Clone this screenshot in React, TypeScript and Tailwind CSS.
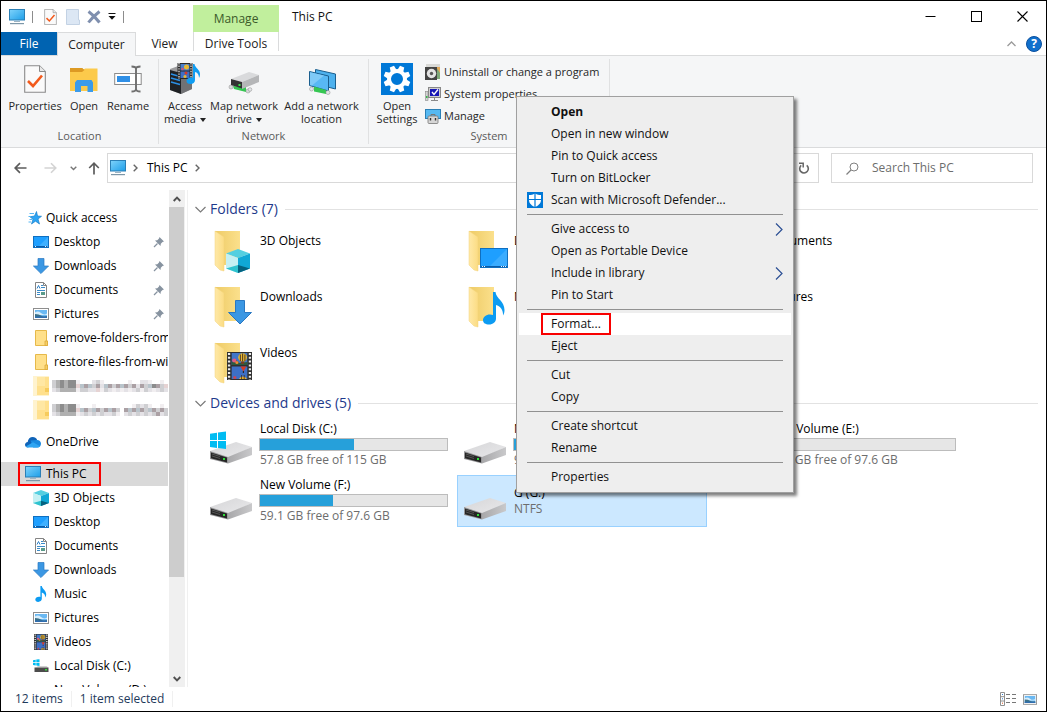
import React from "react";

type IconProps = { className?: string };

/* ---------- shared icons ---------- */

function MonitorIcon({ className = "w-4 h-4" }: IconProps) {
  return (
    <svg viewBox="0 0 16 16" className={className} aria-hidden="true">
      <defs>
        <linearGradient id="monitor" x1="0" y1="0" x2="1" y2="1">
          <stop offset="0" stopColor="#7fd3fb" />
          <stop offset="1" stopColor="#1d9ee8" />
        </linearGradient>
      </defs>
      <rect x="0.5" y="0.5" width="15" height="10.5" fill="url(#monitor)" stroke="#2b7fb5" />
      <rect x="5" y="12" width="6" height="1" fill="#9db4c4" />
      <rect x="1" y="14" width="14" height="1.2" fill="#7d97a8" />
    </svg>
  );
}

function CheckDocIcon({ className = "" }: IconProps) {
  return (
    <svg viewBox="0 0 22 28" className={className} aria-hidden="true">
      <path d="M0.7 0.7H15.5L21.3 6.5V27.3H0.7Z" fill="#fafafa" stroke="#8a8a8a" strokeWidth="1.1" />
      <path d="M15.5 0.7V6.5H21.3" fill="#e8e8e8" stroke="#8a8a8a" />
      <path d="M4 16L9 21L18 10.5" fill="none" stroke="#f25a1c" strokeWidth="2.6" />
    </svg>
  );
}

function DesktopIcon({ className = "w-4 h-4" }: IconProps) {
  return (
    <svg viewBox="0 0 16 16" className={className} aria-hidden="true">
      <rect x="0.5" y="2.5" width="15" height="11" fill="#1e9fff" stroke="#0f6fc0" />
      <path d="M15 3V13H5Z" fill="#3fb0ff" />
      <path d="M1 12.5H15" stroke="#0a5ba8" />
      <path d="M2 12.5H4M12 12.5H14.5" stroke="#e6f4ff" strokeDasharray="1 1" />
    </svg>
  );
}

function DownArrowIcon({ className = "w-4 h-4" }: IconProps) {
  return (
    <svg viewBox="0 0 16 16" className={className} aria-hidden="true">
      <path d="M5 0.5H11V8H15.6L8 15.6L0.4 8H5Z" fill="#3b97e3" stroke="#2a78c2" strokeWidth="0.7" />
    </svg>
  );
}

function DocumentIcon({ className = "w-4 h-4" }: IconProps) {
  return (
    <svg viewBox="0 0 16 16" className={className} aria-hidden="true">
      <path d="M2.5 0.5H10.5L13.5 3.5V15.5H2.5Z" fill="#fff" stroke="#848484" />
      <path d="M10.5 0.5V3.5H13.5" fill="none" stroke="#848484" />
      <path d="M4 6.5L5.5 3.5L7 6.5" fill="none" stroke="#2f7fc4" />
      <path d="M8 3.5H10M8 5.5H12M4 8.5H12M4 10.5H7M4 12.5H7" stroke="#3b8bc8" />
      <rect x="8" y="10" width="4" height="3" fill="#5b9b8a" />
    </svg>
  );
}

function PictureIcon({ className = "w-4 h-4" }: IconProps) {
  return (
    <svg viewBox="0 0 16 16" className={className} aria-hidden="true">
      <rect x="0.5" y="2.5" width="15" height="11" fill="#fff" stroke="#8e8e8e" />
      <rect x="2" y="4" width="12" height="8" fill="#6ab8f2" />
      <path d="M2 6.5Q5 4.5 8 7T14 7.5V9H2Z" fill="#d6edfb" />
      <path d="M2 8Q6 8 8 9.5T14 10V12H2Z" fill="#3a7088" />
      <path d="M2 10.5H14V12H2Z" fill="#2f6db0" />
    </svg>
  );
}

function NoteIcon({ className = "w-4 h-4" }: IconProps) {
  return (
    <svg viewBox="0 0 16 16" className={className} aria-hidden="true">
      <path
        d="M7.4 0H8.8C9.2 3.2 13.2 4.3 13.2 8.3C13.2 9.6 12.7 10.7 12 11.5C12.4 8.8 11 7.2 8.8 6.6V12.8C8.8 14.6 7.2 15.9 5.2 15.9C3.5 15.9 2.3 15 2.3 13.6C2.3 12 4 10.8 6 10.8C6.5 10.8 7 10.9 7.4 11Z"
        fill="#0c9bf2"
      />
    </svg>
  );
}

function FilmArt() {
  return (
    <>
      <rect width="24" height="28" fill="#303030" />
      <path d="M2 1V28M22 1V28" stroke="#ececec" strokeWidth="2.2" strokeDasharray="2 1.8" />
      <rect x="4.5" y="1" width="15" height="12" fill="#4176c8" />
      <rect x="4.5" y="14.5" width="15" height="12.5" fill="#3d6fc6" />
      <path d="M4.5 10L9 8L12 11L19.500 10V13H4.500Z" fill="#2f5a3e" />
      <circle cx="15" cy="5.500" r="4.200" fill="#e9b932" />
      <path d="M15 1.500V9.500M12.800 2.500V9M17.200 2.500V9" stroke="#3d2d22" strokeWidth="0.900" />
      <path d="M13 9.500H17L16 12H14Z" fill="#7b3c20" />
      <circle cx="7" cy="8.500" r="2" fill="#e05a80" />
      <circle cx="9.500" cy="10.500" r="1.500" fill="#ef8a35" />
      <path d="M13 14.500H18.500L15.700 19.500Z" fill="#d83a25" />
      <path d="M15.700 19V21" stroke="#2b1d16" />
      <path d="M11.500 27A4 4 0 0 1 19 27Z" fill="#f0b62c" />
      <path d="M14 23V27M16.500 23V27" stroke="#3d2d22" strokeWidth="0.800" />
      <circle cx="7.500" cy="25.500" r="1.500" fill="#c94654" />
    </>
  );
}

function FilmIcon({ className = "w-4 h-4" }: IconProps) {
  return (
    <svg viewBox="0 0 24 28" className={className} preserveAspectRatio="none" aria-hidden="true">
      <FilmArt />
    </svg>
  );
}

function CubeArt() {
  return (
    <>
      <path d="M12 0L24 4.500L12 9L0 4.500Z" fill="#54cfe0" />
      <path d="M0 4.500L12 9V24L0 19.500Z" fill="#c5f0f3" />
      <path d="M24 4.500L12 9V24L24 19.500Z" fill="#10a8d6" />
      <path d="M0 19.500L12 16V24Z" fill="#2ec3cf" />
      <path d="M24 19.500L12 16V24Z" fill="#05627f" />
    </>
  );
}

function CubeIcon({ className = "w-4 h-4" }: IconProps) {
  return (
    <svg viewBox="0 0 24 24" className={className} aria-hidden="true">
      <CubeArt />
    </svg>
  );
}

function SmallFolderIcon({ className = "w-4 h-4" }: IconProps) {
  return (
    <svg viewBox="0 0 16 16" className={className} aria-hidden="true">
      <path d="M2.5 0.5H13.5V11H14.5V15.5H2.5Z" fill="#ffe08a" stroke="#e6b94a" />
      <path d="M12 11H14.5V15.5H12Z" fill="#f6cf67" stroke="#dca93a" strokeWidth="0.8" />
    </svg>
  );
}

function FolderBack() {
  return (
    <>
      <defs>
        <linearGradient id="folderFront" x1="0" y1="0" x2="1" y2="0">
          <stop offset="0" stopColor="#ffe9a8" />
          <stop offset="1" stopColor="#fbdc83" />
        </linearGradient>
        <linearGradient id="folderBack" x1="0" y1="0" x2="1" y2="0">
          <stop offset="0" stopColor="#eecb66" />
          <stop offset="1" stopColor="#fbe08c" />
        </linearGradient>
      </defs>
      <path d="M7 4H32V38H7Z" fill="url(#folderBack)" />
      <path d="M7 4L16 10V44L12 43L7 38Z" fill="url(#folderFront)" stroke="#f2d27a" strokeWidth="0.5" />
    </>
  );
}

function FolderTileIcon({ kind }: { kind: string }) {
  return (
    <svg viewBox="0 0 48 48" className="h-12 w-12 shrink-0" aria-hidden="true">
      <FolderBack />
      {kind === "3d" && (
        <svg x="18" y="22" width="24" height="24" viewBox="0 0 24 24">
          <CubeArt />
        </svg>
      )}
      {kind === "desktop" && (
        <g>
          <rect x="18.500" y="21.500" width="27" height="19" fill="#1e9fff" stroke="#0f6fc0" />
          <path d="M45 22V39H28Z" fill="#3aacff" />
          <path d="M19 39.500H45" stroke="#0a5ba8" />
          <path d="M20 39.500H23M39 39.500H45" stroke="#e6f4ff" strokeDasharray="1 1" />
        </g>
      )}
      {kind === "download" && (
        <path d="M27.500 17.500H36.500V29.500H43.500L32 41L20.500 29.500H27.500Z" fill="#3b97e3" stroke="#2a78c2" />
      )}
      {kind === "music" && (
        <path
          d="M31 9H33.500C34 15.500 42.500 18 42.500 27C42.500 29 42 31 41 32.500C41.500 27 38 23 34 22V35.500C34 39 31 41.500 27 41.500C23.500 41.500 21 40 21 37C21 34 24 31.500 28 31.500C29.200 31.500 30.200 31.700 31 32Z"
          fill="#0c9bf2"
        />
      )}
      {kind === "document" && (
        <g>
          <path d="M21.500 15.500H36.500L42.500 21.500V42.500H21.500Z" fill="#fff" stroke="#848484" />
          <path d="M25 26H39M25 30H39M25 34H39M25 38H39" stroke="#3b8bc8" />
        </g>
      )}
      {kind === "picture" && (
        <g>
          <rect x="18.500" y="20.500" width="27" height="20" fill="#fff" stroke="#8e8e8e" />
          <rect x="21" y="23" width="22" height="15" fill="#6ab8f2" />
          <path d="M21 31Q31 29 43 34V38H21Z" fill="#3a7088" />
        </g>
      )}
      {kind === "video" && (
        <svg x="19" y="13" width="25" height="28" viewBox="0 0 24 28" preserveAspectRatio="none">
          <FilmArt />
        </svg>
      )}
    </svg>
  );
}

function DriveTileIcon({ windows }: { windows?: boolean }) {
  return (
    <svg viewBox="0 0 48 48" className="h-12 w-12 shrink-0" aria-hidden="true">
      <defs>
        <linearGradient id="driveTop" x1="0" y1="0" x2="1" y2="1">
          <stop offset="0" stopColor="#d6d6d8" />
          <stop offset="1" stopColor="#e9e9eb" />
        </linearGradient>
        <linearGradient id="driveSide" x1="0" y1="0" x2="1" y2="0">
          <stop offset="0" stopColor="#a8a8aa" />
          <stop offset="1" stopColor="#c9c9cb" />
        </linearGradient>
      </defs>
      <path d="M2 31L28 22L44 27L20 38Z" fill="url(#driveTop)" />
      <path d="M20 37L44 27V35L20 43.500Z" fill="url(#driveSide)" />
      <path d="M2 31L20 37V43.500L2 39Z" fill="#969698" />
      <path d="M3 32.500L19 37.500V42.500L3 38.200Z" fill="#262626" />
      <path d="M4 34L12 36.500M4 36L12 38.500" stroke="#555" />
      <rect x="15" y="38" width="2" height="2" fill="#2fe03a" />
      {windows && (
        <path d="M2 13.800L9 12.700V20H2ZM10 12.500L18 11.500V20H10ZM2 21H9V28L2 27ZM10 21H18V29L10 28Z" fill="#00bcf2" />
      )}
    </svg>
  );
}

function SmallDriveIcon({ className = "w-4 h-4" }: IconProps) {
  return (
    <svg viewBox="0 0 16 16" className={className} aria-hidden="true">
      <path d="M0 2.2L2.7 1.7V4.3H0ZM3.3 1.6L6.5 1.2V4.3H3.3ZM0 5H2.7V7.5L0 7.1ZM3.3 5H6.5V8L3.3 7.6Z" fill="#00bcf2" />
      <path d="M3 9.5L5 8H13.5L15.5 9.5Z" fill="#cfcfcf" />
      <rect x="1.5" y="9.5" width="14" height="4.5" fill="#4c4c4c" />
      <rect x="12" y="11" width="2" height="1.5" fill="#35dd3c" />
    </svg>
  );
}

function StarIcon() {
  return (
    <svg viewBox="0 0 16 16" className="h-4 w-4" aria-hidden="true">
      <path d="M10.5 1.5L11.5 6L15.5 6.300L12 9L13.500 14L9.500 11.200L5.500 14L7 9.300L4 6.800L8.500 6Z" fill="#2ba4f4" stroke="#1a7fca" strokeWidth="0.7" />
      <path d="M3.5 3.500H8M2.500 6.500H5M3.500 9.500H6M2.500 12H5" stroke="#55b6f3" />
    </svg>
  );
}

function CloudIcon() {
  return (
    <svg viewBox="0 0 16 16" className="h-4 w-4" aria-hidden="true">
      <path d="M3 13.5C1.2 13.5 0 12.3 0 10.7C0 9.2 1.2 8 2.7 7.9C3 5 5.1 3 7.8 3C9.7 3 11.2 4 12.1 5.7L9 10Z" fill="#0f63b8" />
      <path d="M5.5 6.6L12.1 6C14.3 6 16 7.7 16 9.8C16 12 14.4 13.5 12.3 13.5H8Z" fill="#1a8ae0" />
      <path d="M0.8 12.5L8 8.3L15.2 12.3C14.5 13.1 13.5 13.5 12.3 13.5H3C2.1 13.5 1.3 13.1 0.8 12.5Z" fill="#2ea5f2" />
    </svg>
  );
}

function PinIcon() {
  return (
    <svg viewBox="0 0 12 12" className="h-3 w-3" aria-hidden="true">
      <path d="M6.5 1L11 5.5L9.5 6L7.8 7.7L7.5 10L2 4.5L4.3 4.2L6 2.5Z" fill="#8793a0" />
      <path d="M4.5 7.5L1 11" stroke="#8793a0" strokeWidth="1.3" />
    </svg>
  );
}

function Caret() {
  return (
    <svg viewBox="0 0 6 4" className="ml-1 inline-block h-1 w-[6px] align-middle" aria-hidden="true">
      <path d="M0 0H6L3 4Z" fill="#222" />
    </svg>
  );
}

/* ---------- title bar and tabs ---------- */

function TitleBar() {
  return (
    <header className="flex h-[31px] shrink-0 items-stretch pr-px">
      <div className="flex w-48 items-center pl-2">
        <MonitorIcon />
        <span className="ml-[7px] h-3 w-px bg-[#8c8c8c]" />
        <button aria-label="Properties" className="ml-[11px]">
          <CheckDocIcon className="h-4 w-[13px]" />
        </button>
        <button aria-label="New folder" className="ml-[9px]">
          <svg viewBox="0 0 14 16" className="h-4 w-[14px]">
            <path d="M0.5 0.5H12.5V11H13.5V15.5H0.5Z" fill="#dce7f4" stroke="#c3d2e4" />
          </svg>
        </button>
        <button aria-label="Delete" className="ml-[7px]">
          <svg viewBox="0 0 14 14" className="h-[14px] w-[14px]">
            <path d="M1.5 1.5C5 4 9 8 12.5 12.5M12.5 1.5C8 5 4 9 1.5 12.5" stroke="#7f8fae" strokeWidth="3" fill="none" />
          </svg>
        </button>
        <button aria-label="Customize toolbar" className="ml-[7px]">
          <svg viewBox="0 0 8 7" className="h-[7px] w-2">
            <path d="M0.5 0.5H7.5" stroke="#111" />
            <path d="M0.5 3H7.5L4 6.7Z" fill="#111" />
          </svg>
        </button>
        <span className="ml-[7px] h-3 w-px bg-[#8c8c8c]" />
      </div>
      <div className="mt-1 flex w-[86px] items-center justify-center bg-[#c1ef9d] text-[#3c5a2a]">Manage</div>
      <h1 className="ml-[13px] flex items-center text-[#111]">This PC</h1>
      <div className="ml-auto flex">
        <button aria-label="Minimize" className="flex w-[46px] items-center justify-center">
          <svg viewBox="0 0 11 11" className="h-[11px] w-[11px]"><path d="M0.5 5.5H10.5" stroke="#000" /></svg>
        </button>
        <button aria-label="Maximize" className="flex w-[46px] items-center justify-center">
          <svg viewBox="0 0 11 11" className="h-[11px] w-[11px]"><rect x="0.5" y="0.5" width="10" height="10" fill="none" stroke="#000" /></svg>
        </button>
        <button aria-label="Close" className="flex w-[46px] items-center justify-center">
          <svg viewBox="0 0 11 11" className="h-[11px] w-[11px]"><path d="M0.5 0.5L10.5 10.5M10.5 0.5L0.5 10.5" stroke="#000" strokeWidth="1.1" /></svg>
        </button>
      </div>
    </header>
  );
}

function Tabs() {
  return (
    <nav className="flex h-6 shrink-0 items-stretch border-b border-[#dadbdc]">
      <button className="w-14 bg-[#0063b1] text-white">File</button>
      <button className="-mb-px w-[79px] border-x border-t border-[#dadbdc] bg-[#f5f6f7] text-[#222]">Computer</button>
      <button className="w-[57px] text-[#222]">View</button>
      <button className="mb-1 w-[86px] border-x border-[#dadbdc] pt-1 text-[#222]">Drive Tools</button>
      <div className="ml-auto flex items-center gap-[10px] pr-1">
        <button aria-label="Collapse ribbon">
          <svg viewBox="0 0 9 6" className="h-[6px] w-[9px]"><path d="M0.5 5L4.5 1L8.5 5" fill="none" stroke="#9a9a9a" strokeWidth="1.3" /></svg>
        </button>
        <button aria-label="Help" className="flex h-4 w-4 items-center justify-center rounded-full border border-[#0a4f9e] bg-[#1070cc] text-xs leading-3 font-bold text-white">?</button>
      </div>
    </nav>
  );
}

/* ---------- ribbon ---------- */

function RibbonButton({ icon, lines, caret, width }: { icon: React.ReactNode; lines: string[]; caret?: boolean; width: string }) {
  return (
    <button className={`flex flex-col items-center pt-1 ${width}`}>
      <span className="mb-1 flex h-8 items-center justify-center">{icon}</span>
      {lines.map((line, i) => (
        <span key={line} className="leading-[13px] whitespace-nowrap">
          {line}
          {caret && i === lines.length - 1 && <Caret />}
        </span>
      ))}
    </button>
  );
}

function RibbonGroup({ label, width, children }: { label: string; width: string; children: React.ReactNode }) {
  return (
    <section aria-label={label} className={`flex flex-col border-r border-[#e0e1e2] ${width}`}>
      <div className="flex h-[71px]">{children}</div>
      <div className="text-center leading-4 text-[#5a5a5a]">{label}</div>
    </section>
  );
}

function OpenFolderIcon() {
  return (
    <svg viewBox="0 0 28 25" className="h-[25px] w-7">
      <path d="M0 1H12L14 3H0Z" fill="#d8951c" />
      <path d="M0 4H12L15 1.5H27.5V24H0Z" fill="#fcca4b" />
      <path d="M0 1H12L14.5 3L12 5H0Z" fill="#dd9a24" />
      <path d="M5 25V15.5L7 13H21.5L23 15.5V25H17.5V19H11V25Z" fill="#3b9bea" />
    </svg>
  );
}

function RenameIcon() {
  return (
    <svg viewBox="0 0 28 28" className="h-7 w-7">
      <rect x="0.7" y="8.5" width="26.5" height="11" fill="#fff" stroke="#8b8b8b" />
      <rect x="3" y="11" width="13" height="6" fill="#2f8fe6" />
      <path d="M17.5 1.5C20 1.5 22 2 22 4V24C22 26 20 26.5 17.5 26.5M26.5 1.5C24 1.5 22 2 22 4M22 24C22 26 24 26.5 26.5 26.5" fill="none" stroke="#6f6f6f" strokeWidth="1.9" />
    </svg>
  );
}

function MediaIcon() {
  return (
    <svg viewBox="0 0 32 32" className="h-8 w-8">
      <path d="M1 6L12 2L23 6V26L12 31L1 27Z" fill="#9c9c9e" />
      <path d="M1 7L12 10V31L1 27Z" fill="#1f2124" />
      <path d="M2 11L11 13.5M2 15L11 17.5M2 19L11 21.5" stroke="#2b8fe4" strokeWidth="1.5" />
      <path d="M12 9L23 6V26L12 31Z" fill="#717275" />
      <rect x="8.5" y="0" width="15" height="16" fill="#282828" />
      <path d="M10 0V16M22 0V16" stroke="#ddd" strokeWidth="1.3" strokeDasharray="1.4 1.2" />
      <rect x="11.5" y="1" width="9" height="6.500" fill="#4a80cc" />
      <rect x="11.5" y="8.500" width="9" height="6.500" fill="#3d6fc6" />
      <circle cx="17.500" cy="4" r="2.500" fill="#e9b932" />
      <circle cx="13.500" cy="6" r="1.200" fill="#d64f70" />
      <circle cx="17" cy="10" r="1.500" fill="#d83a25" />
      <circle cx="16" cy="13.500" r="1.600" fill="#e9b932" />
      <path d="M24 1H25.500C26 5 31 6.500 31 11C31 13 30.500 14 30 15C30 11 28 9.500 26 9V17C26 19.500 24 21 21.500 21C19 21 17.500 19.800 17.500 18C17.500 16 19.500 14.500 22 14.500C22.800 14.500 23.500 14.600 24 14.800Z" fill="#109df2" />
    </svg>
  );
}

function NetworkDriveIcon() {
  return (
    <svg viewBox="0 0 32 24" className="mt-2 h-6 w-8">
      <path d="M5 15L18 16V21L6 18Z" fill="#35c652" />
      <circle cx="20" cy="20" r="2" fill="#d6d8da" stroke="#9a9a9a" strokeWidth="0.6" />
      <circle cx="3" cy="16" r="2" fill="#d6d8da" stroke="#9a9a9a" strokeWidth="0.6" />
      <path d="M3 8L21 1L31 4L14 11Z" fill="#d9dadc" />
      <path d="M14 11L31 4V11L14 18Z" fill="#b5b6b8" />
      <path d="M3 8L14 11V17.5L3 14Z" fill="#333" />
      <rect x="10.5" y="13" width="2" height="2" fill="#3de34a" />
      <circle cx="22" cy="18.5" r="1.8" fill="#e4e6e8" stroke="#999" strokeWidth="0.6" />
    </svg>
  );
}

function NetworkLocationIcon() {
  return (
    <svg viewBox="0 0 30 28" className="mt-1 h-7 w-[30px]">
      <path d="M8.500 2.500L28.500 7V22L8.500 17Z" fill="#4db1ee" stroke="#1b5f8f" />
      <path d="M2.500 4.500L21.500 9V24L2.500 18.500Z" fill="#58b8f4" stroke="#1b5f8f" />
      <path d="M3 5.200L17 8.500L5 18.500L3 18Z" fill="#7fcaf8" />
      <path d="M7 19.500L19 23V27L7 24.500Z" fill="#35c652" />
      <circle cx="4.500" cy="22" r="2" fill="#e4e6e8" stroke="#999" strokeWidth="0.600" />
      <circle cx="21" cy="25.500" r="2" fill="#e4e6e8" stroke="#999" strokeWidth="0.600" />
    </svg>
  );
}

function SettingsIcon() {
  return (
    <svg viewBox="0 0 32 32" className="h-8 w-8">
      <rect width="32" height="32" fill="#0078d7" />
      <g fill="#fff">
        {[22.5, 67.5, 112.5, 157.5, 202.5, 247.5, 292.5, 337.5].map((a) => (
          <path key={a} d="M12.8 8L13.7 2.600H18.300L19.200 8Z" transform={`rotate(${a} 16 16)`} />
        ))}
      </g>
      <circle cx="16" cy="16" r="8" fill="none" stroke="#fff" strokeWidth="4" />
    </svg>
  );
}

function UninstallIcon() {
  return (
    <svg viewBox="0 0 16 16" className="h-4 w-4">
      <rect x="1" y="0" width="14" height="4" fill="#d9d9d6" />
      <rect x="10" y="3" width="5" height="12" fill="#7ea878" />
      <path d="M11 3H15V9Z" fill="#e2aa5c" />
      <rect x="0" y="3" width="12" height="13" fill="#444" />
      <circle cx="6.5" cy="9.5" r="4.7" fill="#e4e4e4" />
      <circle cx="6.5" cy="9.5" r="1.7" fill="#555" />
    </svg>
  );
}

function SystemIcon() {
  return (
    <svg viewBox="0 0 16 16" className="h-4 w-4">
      <rect x="0.5" y="5.5" width="2.5" height="9" fill="#d4d4d4" stroke="#888" strokeWidth="0.6" />
      <rect x="1" y="10" width="1.5" height="2" fill="#38b54a" />
      <rect x="3.5" y="1.5" width="12" height="10" fill="#cfcfcf" stroke="#888" />
      <rect x="5" y="3" width="9" height="7" fill="#1717b5" />
      <path d="M7 6L9 8.5L13 3.5" fill="none" stroke="#fff" strokeWidth="1.4" />
      <path d="M6 14.5H13M9.5 12V14" stroke="#8a8a8a" />
    </svg>
  );
}

function ManageIcon() {
  return (
    <svg viewBox="0 0 16 16" className="h-4 w-4">
      <rect x="0.5" y="1.5" width="15" height="9" fill="#56b9f2" stroke="#2b7fb5" />
      <rect x="3" y="8" width="10" height="7.5" rx="1" fill="#d6d6d6" stroke="#777" strokeWidth="0.8" />
      <path d="M6 8V6.5H10V8" fill="none" stroke="#777" />
      <path d="M5.5 10V12.5M10.5 10V12.5" stroke="#333" strokeWidth="1.4" />
    </svg>
  );
}

const systemCommands = [
  { label: "Uninstall or change a program", icon: <UninstallIcon /> },
  { label: "System properties", icon: <SystemIcon /> },
  { label: "Manage", icon: <ManageIcon /> },
];

function Ribbon() {
  return (
    <div className="flex h-[92px] shrink-0 border-b border-[#dadbdc] bg-[#f5f6f7] py-[3px] text-[11px] text-[#262626]">
      <RibbonGroup label="Location" width="w-[158px]">
        <RibbonButton width="ml-1 w-[60px]" icon={<CheckDocIcon className="h-7 w-[22px]" />} lines={["Properties"]} />
        <RibbonButton width="w-[38px]" icon={<OpenFolderIcon />} lines={["Open"]} />
        <RibbonButton width="w-[50px]" icon={<RenameIcon />} lines={["Rename"]} />
      </RibbonGroup>
      <RibbonGroup label="Network" width="w-[210px]">
        <RibbonButton width="ml-1 w-[44px]" icon={<MediaIcon />} lines={["Access", "media"]} caret />
        <RibbonButton width="w-[74px]" icon={<NetworkDriveIcon />} lines={["Map network", "drive"]} caret />
        <RibbonButton width="w-[81px]" icon={<NetworkLocationIcon />} lines={["Add a network", "location"]} />
      </RibbonGroup>
      <RibbonGroup label="System" width="w-[241px]">
        <RibbonButton width="ml-1 w-12" icon={<SettingsIcon />} lines={["Open", "Settings"]} />
        <div className="ml-1 flex flex-col pt-[2px]">
          {systemCommands.map((c) => (
            <button key={c.label} className="flex h-[22px] items-center gap-[3px] whitespace-nowrap">
              {c.icon}
              {c.label}
            </button>
          ))}
        </div>
      </RibbonGroup>
    </div>
  );
}

/* ---------- address row ---------- */

function Crumb() {
  return (
    <svg viewBox="0 0 5 8" className="h-2 w-[5px]" aria-hidden="true">
      <path d="M0.7 0.7L4 4L0.7 7.3" fill="none" stroke="#666" strokeWidth="1.4" />
    </svg>
  );
}

function AddressRow() {
  return (
    <div className="flex h-[42px] shrink-0 items-start pt-[5px] pr-[13px] pl-[13px]">
      <div className="flex h-[30px] w-[93px] items-center">
        <button aria-label="Back">
          <svg viewBox="0 0 13 12" className="h-3 w-[13px]"><path d="M12.5 6H1.5M6 1.2L1.2 6L6 10.8" fill="none" stroke="#5c5c5c" strokeWidth="1.7" /></svg>
        </button>
        <button aria-label="Forward" className="ml-[17px]">
          <svg viewBox="0 0 13 12" className="h-3 w-[13px]"><path d="M0.5 6H11.5M7 1.2L11.8 6L7 10.8" fill="none" stroke="#d3d3d3" strokeWidth="1.6" /></svg>
        </button>
        <button aria-label="Recent locations" className="ml-[13px]">
          <svg viewBox="0 0 7 5" className="h-[5px] w-[7px]"><path d="M0.7 0.7L3.5 3.5L6.3 0.7" fill="none" stroke="#777" strokeWidth="1.4" /></svg>
        </button>
        <button aria-label="Up" className="ml-[11px]">
          <svg viewBox="0 0 12 13" className="h-[13px] w-3"><path d="M6 12.5V1.5M1.2 6L6 1.2L10.8 6" fill="none" stroke="#5c5c5c" strokeWidth="1.7" /></svg>
        </button>
      </div>
      <div className="flex h-[30px] grow items-center border border-[#d9d9d9] pl-[2px]">
        <MonitorIcon />
        <span className="ml-[7px]"><Crumb /></span>
        <button className="mr-[7px] ml-[9px]">This PC</button>
        <Crumb />
        <button aria-label="Refresh" className="mr-2 ml-auto">
          <svg viewBox="0 0 12 13" className="h-[13px] w-3">
            <path d="M8.7 3.3A4.3 4.3 0 1 1 3.2 3.4" fill="none" stroke="#666" strokeWidth="1.6" />
            <path d="M1 1.2H5.2V5.4" fill="none" stroke="#666" strokeWidth="1.5" />
          </svg>
        </button>
      </div>
      <label className="ml-3 flex h-[30px] w-[202px] items-center border border-[#d9d9d9] pl-[14px]">
        <svg viewBox="0 0 13 13" className="h-[13px] w-[13px] shrink-0" aria-hidden="true">
          <circle cx="8" cy="5" r="4" fill="none" stroke="#808080" />
          <path d="M5 8L0.5 12.5" stroke="#808080" strokeWidth="1.2" />
        </svg>
        <input
          type="search"
          aria-label="Search This PC"
          placeholder="Search This PC"
          className="ml-[13px] w-full min-w-0 bg-transparent outline-none placeholder:text-[#6d6d6d]"
        />
      </label>
    </div>
  );
}

/* ---------- navigation pane ---------- */

type NavItem = { label: string; icon: React.ReactNode; pinned?: boolean };

function NavRow({ item }: { item: NavItem }) {
  return (
    <a href="#" className="flex h-6 shrink-0 items-center pl-8 whitespace-nowrap">
      <span className="mr-[5px] shrink-0">{item.icon}</span>
      {item.label}
      {item.pinned && <span className="mr-[3px] ml-auto"><PinIcon /></span>}
    </a>
  );
}

const quickItems: NavItem[] = [
  { label: "Desktop", icon: <DesktopIcon />, pinned: true },
  { label: "Downloads", icon: <DownArrowIcon />, pinned: true },
  { label: "Documents", icon: <DocumentIcon />, pinned: true },
  { label: "Pictures", icon: <PictureIcon />, pinned: true },
  { label: "remove-folders-from-", icon: <SmallFolderIcon /> },
  { label: "restore-files-from-win", icon: <SmallFolderIcon /> },
];

const pcItems: NavItem[] = [
  { label: "3D Objects", icon: <CubeIcon /> },
  { label: "Desktop", icon: <DesktopIcon /> },
  { label: "Documents", icon: <DocumentIcon /> },
  { label: "Downloads", icon: <DownArrowIcon /> },
  { label: "Music", icon: <NoteIcon /> },
  { label: "Pictures", icon: <PictureIcon /> },
  { label: "Videos", icon: <FilmIcon className="mx-px h-4 w-[14px]" /> },
  { label: "Local Disk (C:)", icon: <SmallDriveIcon /> },
  { label: "New Volume (D:)", icon: <span className="block h-4 w-4" /> },
];

const shades: Record<string, string> = {
  a: "#8c8c8c",
  b: "#b0b0b0",
  c: "#cfcfd2",
  d: "#e4e2e6",
  e: "#f1eef0",
  f: "#e6d3d3",
  g: "#b9c4cb",
  h: "#aba0a4",
  ".": "#ffffff",
};

const mosaics = [
  ["cbabaae...dce......e..dde..e.", "cbabaafghgchdghchghchdhcgahcf", "dcbbbbeccddfecdedededcecdedcd"],
  ["cbabaae...e.........ecdce..e.", "cbabaafghcghchghc.hghghcghchc", "dcbbbbedcdcdcddce.dcdcdcdchdc"],
];

function MosaicRow({ rows }: { rows: string[] }) {
  return (
    <div className="flex h-6 shrink-0 items-center pl-8" aria-hidden="true">
      <svg viewBox="0 0 16 20" className="mr-[3px] h-5 w-4 shrink-0">
        <rect width="16" height="20" fill="#fff3cf" />
        <rect x="4" y="1" width="12" height="18" fill="#ffe08d" />
        <rect x="4" y="1" width="8" height="9" fill="#ffe7a3" />
        <rect x="12" y="12" width="4" height="4" fill="#f6cb5c" />
      </svg>
      <svg viewBox="0 0 116 12" className="h-3 w-[116px] shrink-0" shapeRendering="crispEdges">
        {rows.map((row, y) =>
          row.split("").map((c, x) => <rect key={`${x}-${y}`} x={x * 4} y={y * 4} width="4" height="4" fill={shades[c]} />)
        )}
      </svg>
    </div>
  );
}

function NavPane() {
  return (
    <div className="flex w-[187px] shrink-0 border-r border-[#f0f0f0]">
      <nav className="flex w-[167px] shrink-0 flex-col overflow-hidden pt-4">
        <a href="#" className="flex h-6 shrink-0 items-center gap-1 pl-[25px]"><StarIcon />Quick access</a>
        {quickItems.map((i) => <NavRow key={i.label} item={i} />)}
        {mosaics.map((m, i) => <MosaicRow key={i} rows={m} />)}
        <a href="#" className="mt-2 flex h-6 shrink-0 items-center gap-[5px] pl-6"><CloudIcon />OneDrive</a>
        <a href="#" aria-current="page" className="mt-2 flex h-6 shrink-0 items-center bg-[#d9d9d9] pl-[17px]">
          <span className="flex h-6 items-center gap-[5px] border-2 border-[#f80000] pr-3 pl-[5px]"><MonitorIcon />This PC</span>
        </a>
        {pcItems.map((i) => <NavRow key={i.label} item={i} />)}
      </nav>
      <div className="ml-px flex w-4 flex-col bg-[#f0f0f0]">
        <button aria-label="Scroll up" className="flex h-[17px] shrink-0 items-center justify-center">
          <svg viewBox="0 0 8 6" className="h-[6px] w-2"><path d="M0.7 5L4 1.7L7.3 5" fill="none" stroke="#505050" strokeWidth="1.9" /></svg>
        </button>
        <div className="flex grow flex-col pr-px">
          <div className="h-[80%] bg-[#cdcdcd]" />
        </div>
        <button aria-label="Scroll down" className="flex h-[17px] shrink-0 items-center justify-center">
          <svg viewBox="0 0 8 6" className="h-[6px] w-2"><path d="M0.7 1L4 4.3L7.3 1" fill="none" stroke="#505050" strokeWidth="1.9" /></svg>
        </button>
      </div>
    </div>
  );
}

/* ---------- content ---------- */

function SectionHeader({ title }: { title: string }) {
  return (
    <h2 className="flex h-[26px] items-center text-sm text-[#1e3a8c]">
      <svg viewBox="0 0 11 7" className="mr-1 h-[7px] w-[11px]" aria-hidden="true">
        <path d="M0.5 1L5.5 6L10.5 1" fill="none" stroke="#7a7a7a" strokeWidth="1.2" />
      </svg>
      {title}
      <span className="ml-[7px] h-px grow bg-[#e2e2e2]" />
    </h2>
  );
}

const folders = [
  { name: "3D Objects", kind: "3d" },
  { name: "Desktop", kind: "desktop" },
  { name: "Documents", kind: "document" },
  { name: "Downloads", kind: "download" },
  { name: "Music", kind: "music" },
  { name: "Pictures", kind: "picture" },
  { name: "Videos", kind: "video" },
];

const drives = [
  { name: "Local Disk (C:)", detail: "57.8 GB free of 115 GB", used: 50, windows: true },
  { name: "New Volume (D:)", detail: "93.2 GB free of 97.6 GB", used: 5 },
  { name: "New Volume (E:)", detail: "93.2 GB free of 97.6 GB", used: 5 },
  { name: "New Volume (F:)", detail: "59.1 GB free of 97.6 GB", used: 39 },
  { name: "G (G:)", detail: "NTFS", selected: true },
];

function Content() {
  return (
    <main className="min-w-0 grow overflow-hidden pt-[6px] pr-2 pl-[7px]">
      <SectionHeader title="Folders (7)" />
      <div className="mt-1 ml-2 grid grid-cols-[repeat(auto-fill,250px)] gap-1">
        {folders.map((f) => (
          <div key={f.name} className="flex h-[52px] items-start pt-px pl-[5px]">
            <FolderTileIcon kind={f.kind} />
            <span className="mt-[6px] ml-1 leading-4">{f.name}</span>
          </div>
        ))}
      </div>
      <SectionHeader title="Devices and drives (5)" />
      <div className="mt-[3px] ml-2 grid grid-cols-[repeat(auto-fill,250px)] gap-1">
        {drives.map((d) => (
          <div
            key={d.name}
            className={d.selected ? "flex h-[52px] items-start border border-[#99d1ff] bg-[#cce8ff] pl-1" : "flex h-[52px] items-start border border-transparent pl-1"}
          >
            <DriveTileIcon windows={d.windows} />
            <div className="ml-[3px] w-[189px]">
              <div className={d.used === undefined ? "mt-[9px] pl-px leading-4" : "mt-px pl-px leading-4"}>{d.name}</div>
              {d.used !== undefined && (
                <div className="mt-px h-[13px] border border-[#bcbcbc] bg-[#e6e6e6]" role="meter" aria-label={d.name} aria-valuenow={d.used}>
                  <div className="h-full bg-[#26a0da]" style={{ width: `${d.used}%` }} />
                </div>
              )}
              <div className={d.used === undefined ? "pl-px leading-4 text-[#6d6d6d]" : "mt-px pl-px leading-4 text-[#6d6d6d]"}>{d.detail}</div>
            </div>
          </div>
        ))}
      </div>
    </main>
  );
}

/* ---------- status bar ---------- */

function StatusBar() {
  return (
    <footer className="flex h-6 shrink-0 items-center pr-[9px] pl-[14px] text-[#1e395b]">
      <span className="border-r border-[#f0f0f0] pr-2">12 items</span>
      <span className="border-r border-[#f0f0f0] px-2">1 item selected</span>
      <button aria-label="Details view" className="ml-auto">
        <svg viewBox="0 0 16 14" className="h-[14px] w-4">
          <path d="M0.5 0.5H4.5V13.5H0.5ZM0.5 4.7H4.5M0.5 9H4.5" fill="none" stroke="#909090" />
          <path d="M6 2.5H10M12 2.5H16M6 6.5H10M12 6.5H16M6 10.5H10M12 10.5H16" stroke="#777" />
          <path d="M2 2.5H3M2 6.8H3" stroke="#2d7dd2" />
          <path d="M2 11.2H3" stroke="#e05a20" />
        </svg>
      </button>
      <button aria-label="Large icons view" className="ml-[7px]">
        <PictureIcon className="h-[15px] w-[14px]" />
      </button>
    </footer>
  );
}

/* ---------- context menu ---------- */

type MenuItem = { label: string; bold?: boolean; shield?: boolean; submenu?: boolean; active?: boolean };

const menuGroups: MenuItem[][] = [
  [
    { label: "Open", bold: true },
    { label: "Open in new window" },
    { label: "Pin to Quick access" },
    { label: "Turn on BitLocker" },
    { label: "Scan with Microsoft Defender...", shield: true },
  ],
  [
    { label: "Give access to", submenu: true },
    { label: "Open as Portable Device" },
    { label: "Include in library", submenu: true },
    { label: "Pin to Start" },
  ],
  [{ label: "Format...", active: true }, { label: "Eject" }],
  [{ label: "Cut" }, { label: "Copy" }],
  [{ label: "Create shortcut" }, { label: "Rename" }],
  [{ label: "Properties" }],
];

function ContextMenu() {
  return (
    <div role="menu" className="absolute top-[95px] left-[515px] w-[278px] border border-[#a0a0a0] bg-[#eeeeee] px-[2px] py-1 text-[#111] shadow-[3px_3px_3px_rgba(0,0,0,0.5)]">
      {menuGroups.map((group, g) => (
        <React.Fragment key={g}>
          {g > 0 && <div role="separator" className="mx-2 my-[3px] h-px bg-[#919191]" />}
          {group.map((m) => (
            <button
              role="menuitem"
              key={m.label}
              className={m.active ? "flex h-[22px] w-full items-center bg-white" : "flex h-[22px] w-full items-center"}
            >
              <span className={m.active ? "flex w-[22px] shrink-0 pl-2" : "flex w-8 shrink-0 pl-2"}>
                {m.shield && (
                  <svg viewBox="0 0 16 16" className="h-4 w-4">
                    <rect width="16" height="16" fill="#0078d7" />
                    <path d="M8 1.5C10 2.8 12 3 14 3V8C14 11.5 11 13.8 8 15C5 13.8 2 11.5 2 8V3C4 3 6 2.8 8 1.5Z" fill="#fff" />
                    <path d="M8 1V15M2 7.5H14" stroke="#0078d7" strokeWidth="1.2" />
                  </svg>
                )}
              </span>
              <span
                className={
                  m.active
                    ? "flex h-[22px] items-center border-2 border-[#f80000] px-2"
                    : m.bold
                      ? "font-bold"
                      : ""
                }
              >
                {m.label}
              </span>
              {m.submenu && (
                <svg viewBox="0 0 8 13" className="mr-2 ml-auto h-[13px] w-2" aria-hidden="true">
                  <path d="M1 0.5L7 6.5L1 12.5" fill="none" stroke="#2b4f94" strokeWidth="1.2" />
                </svg>
              )}
            </button>
          ))}
        </React.Fragment>
      ))}
    </div>
  );
}

export default function App() {
  return (
    <div className="relative flex h-screen flex-col overflow-hidden border border-black bg-white font-['Open_Sans','Noto_Sans',sans-serif] text-xs text-black">
      <TitleBar />
      <Tabs />
      <Ribbon />
      <AddressRow />
      <div className="flex min-h-0 grow">
        <NavPane />
        <Content />
      </div>
      <StatusBar />
      <ContextMenu />
    </div>
  );
}
